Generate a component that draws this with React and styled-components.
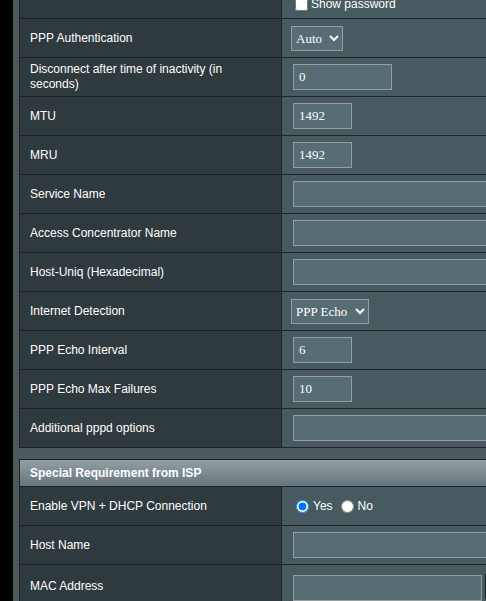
import React from "react";
import styled, { createGlobalStyle } from "styled-components";

const Global = createGlobalStyle`
  html, body { margin: 0; padding: 0; background: #000; overflow: hidden; }
  body { font-family: "Liberation Sans", Arial, sans-serif; font-size: 12px; color: #fff; }
`;

const Page = styled.div`
  display: flex;
  width: 900px;
  height: 601px;
  overflow: hidden;
  padding-left: 13px;
  background: #000;
`;

const Panel = styled.div`
  flex: 1;
  background: #4d595d;
  padding: 0 6px;
  margin-top: -38px;
  display: flex;
  flex-direction: column;
  gap: 11px;
`;

const Table = styled.div`
  width: 720px;
  border: 1px solid #222;
  display: flex;
  flex-direction: column;
`;

const Head = styled.div`
  height: 26px;
  display: flex;
  align-items: center;
  padding-left: 10px;
  font-weight: bold;
  font-size: 12px;
  color: #fff;
  background: linear-gradient(#92a0a5 0%, #66757c 100%);
  border-bottom: 1px solid #222;
`;

const Row = styled.div`
  display: grid;
  grid-template-columns: 262px 1fr;
  min-height: ${(p) => p.$h || 38}px;
  border-bottom: 1px solid #222;
  &:last-child { border-bottom: none; }
`;

const Th = styled.div`
  box-sizing: border-box;
  background: #2f3a3e;
  border-right: 1px solid #222;
  padding: 4px 20px 4px 10px;
  display: flex;
  align-items: center;
  line-height: 15px;
  color: #fff;
`;

const Td = styled.div`
  background: #475a5f;
  padding: ${(p) => p.$pad || "0 11px"};
  display: flex;
  flex-direction: ${(p) => (p.$col ? "column" : "row")};
  align-items: ${(p) => (p.$col ? "flex-start" : "center")};
  gap: ${(p) => (p.$col ? "2px" : "0")};
`;

const Input = styled.input`
  box-sizing: border-box;
  width: ${(p) => p.$w}px;
  height: 26px;
  margin: ${(p) => (p.$low ? "4px 0 0" : "0")};
  padding: 0 5px;
  background: #576d73;
  border: 1px solid #929ea1;
  color: #fff;
  font-family: "Liberation Serif", "Times New Roman", serif;
  font-size: 13px;
  outline: none;
`;

const Select = styled.select`
  height: 25px;
  margin: 0 0 0 -2px;
  padding: 0 4px 0 0;
  background: #576d73;
  border: 1px solid #929ea1;
  border-radius: 0;
  color: #fff;
  font-family: "Liberation Serif", "Times New Roman", serif;
  font-size: 13px;
  outline: none;
`;

const CheckLine = styled.label`
  height: 16px;
  display: flex;
  align-items: center;
  font-size: 12px;
  color: #fff;
  input { margin: 0 3px 0 2px; width: 13px; height: 13px; }
`;

const RadioLabel = styled.label`
  display: inline-flex;
  align-items: center;
  font-size: 12px;
  color: #fff;
  margin-right: 5px;
  input { margin: 0 4px 0 3px; width: 13px; height: 13px; }
`;

const GenButton = styled.button`
  height: 30px;
  margin-left: 3px;
  padding: 0 10px;
  background: linear-gradient(#233438 0%, #0f1c1f 100%);
  border: 1px solid #1a2528;
  border-radius: 4px;
  color: #fff;
  font-family: "Liberation Sans", Arial, sans-serif;
  font-size: 12px;
  white-space: nowrap;
`;

const rows = [
  ["PPP Authentication", { sel: ["Auto", "PAP"] }],
  ["Disconnect after time of inactivity (in seconds)", { val: "0", w: 99 }],
  ["MTU", { val: "1492", w: 59 }],
  ["MRU", { val: "1492", w: 59 }],
  ["Service Name", { val: "", w: 270 }],
  ["Access Concentrator Name", { val: "", w: 270 }],
  ["Host-Uniq (Hexadecimal)", { val: "", w: 270 }],
  ["Internet Detection", { sel: ["PPP Echo", "Disable"] }],
  ["PPP Echo Interval", { val: "6", w: 59 }],
  ["PPP Echo Max Failures", { val: "10", w: 59 }],
  ["Additional pppd options", { val: "", w: 270 }],
];

function Field({ f }) {
  if (f.sel) {
    return (
      <Select defaultValue={f.sel[0]}>
        {f.sel.map((o) => (
          <option key={o}>{o}</option>
        ))}
      </Select>
    );
  }
  return <Input $w={f.w} defaultValue={f.val} />;
}

export default function App() {
  return (
    <>
      <Global />
      <Page>
        <Panel>
          <Table>
            <Row>
              <Th>Password</Th>
              <Td $col $pad="5px 11px 6px">
                <Input $w={180} type="password" defaultValue="" />
                <CheckLine>
                  <input type="checkbox" />
                  Show password
                </CheckLine>
              </Td>
            </Row>
            {rows.map(([label, f]) => (
              <Row key={label}>
                <Th>{label}</Th>
                <Td>
                  <Field f={f} />
                </Td>
              </Row>
            ))}
          </Table>
          <Table>
            <Head>Special Requirement from ISP</Head>
            <Row>
              <Th>Enable VPN + DHCP Connection</Th>
              <Td>
                <RadioLabel>
                  <input type="radio" name="vpndhcp" defaultChecked />
                  Yes
                </RadioLabel>
                <RadioLabel>
                  <input type="radio" name="vpndhcp" />
                  No
                </RadioLabel>
              </Td>
            </Row>
            <Row>
              <Th>Host Name</Th>
              <Td>
                <Input $w={270} defaultValue="" />
              </Td>
            </Row>
            <Row $h={42}>
              <Th>MAC Address</Th>
              <Td>
                <Input $w={189} $low defaultValue="" />
                <GenButton>MAC Clone</GenButton>
              </Td>
            </Row>
          </Table>
        </Panel>
      </Page>
    </>
  );
}
